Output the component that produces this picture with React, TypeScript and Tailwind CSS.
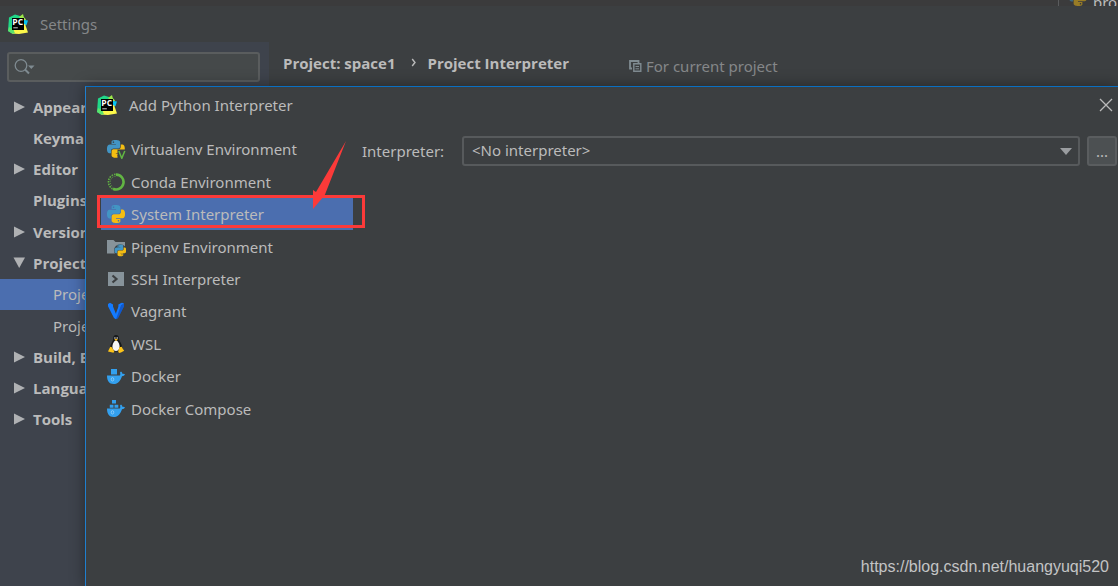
import React from 'react'
import clsx from 'clsx'

const PYTHON_SNAKE =
  'M14.25.18l.9.2.73.26.59.3.45.32.34.34.25.34.16.33.1.3.04.26.02.2-.01.13V8.5l-.05.63-.13.55-.21.46-.26.38-.3.31-.33.25-.35.19-.35.14-.33.1-.3.07-.26.04-.21.02H8.77l-.69.05-.59.14-.5.22-.41.27-.33.32-.27.35-.2.36-.15.37-.1.35-.07.32-.04.27-.02.21v3.06H3.17l-.21-.03-.28-.07-.32-.12-.35-.18-.36-.26-.36-.36-.35-.46-.32-.59-.28-.73-.21-.88-.14-1.05-.05-1.23.06-1.22.16-1.04.24-.87.32-.71.36-.57.4-.44.42-.33.42-.24.4-.16.36-.1.32-.05.24-.01h.16l.06.01h8.16v-.83H6.18l-.01-2.75-.02-.37.05-.34.11-.31.17-.28.25-.26.31-.23.38-.2.44-.18.51-.15.58-.12.64-.1.71-.06.77-.04.84-.02 1.27.05zm-6.3 1.98l-.23.33-.08.41.08.41.23.34.33.22.41.09.41-.09.33-.22.23-.34.08-.41-.08-.41-.23-.33-.33-.22-.41-.09-.41.09z'

function Snakes() {
  return (
    <>
      <path d={PYTHON_SNAKE} fill="#4295c4" />
      <path d={PYTHON_SNAKE} fill="#f4bd12" transform="rotate(180 12 12)" />
    </>
  )
}

function PythonIcon({ className = 'size-[18px]' }: any) {
  return (
    <svg viewBox="0 0 24 24" className={className}>
      <Snakes />
    </svg>
  )
}

function VirtualenvIcon() {
  return (
    <svg viewBox="0 0 20 20" className="size-5">
      <g transform="translate(1 1) scale(.74)">
        <Snakes />
      </g>
      <path d="M11.5 10.5h8.5v9h-8.5z" fill="#3c3f41" />
      <path d="M12.8 12l3 7.3 3-7.3" fill="none" stroke="#62b543" strokeWidth="1.5" />
    </svg>
  )
}

function CondaIcon() {
  return (
    <svg viewBox="0 0 18 18" className="size-[18px]" fill="none" stroke="#62b543">
      <path d="M9 1.6a7.4 7.4 0 1 1-3 14.100" strokeWidth="2.6" />
      <path d="M8.5 1.2a7.8 7.800 0 0 0-3 14.600" strokeWidth="1.600" strokeDasharray="1.5 1.1" />
      <path d="M8.5 3.2a5.8 5.800 0 0 0-3 10.400" strokeWidth="1" strokeDasharray="1 1.4" />
    </svg>
  )
}

function PipenvIcon() {
  return (
    <svg viewBox="0 0 20 20" className="size-5">
      <path d="M1 3h6.500l2 2H19v11.500H1z" fill="#87939a" />
      <circle cx="14.200" cy="13.500" r="6.200" fill="#3c3f41" />
      <g transform="translate(8.500 7.500) scale(.49)">
        <Snakes />
      </g>
    </svg>
  )
}

function SshIcon() {
  return (
    <svg viewBox="0 0 18 18" className="size-[18px]">
      <path d="M1 2h16v14H1z" fill="#87939a" />
      <path d="M5.500 5.500L9.500 9l-4 3.500" fill="none" stroke="#3c3f41" strokeWidth="2.200" />
    </svg>
  )
}

function VagrantIcon() {
  return (
    <svg viewBox="0 0 18 18" className="size-[18px]">
      <path d="M11.500 2.500L15 .8l2 1v2.400L11 16l-2 1.200-2-1.700L11.500 5z" fill="#1159cc" />
      <path d="M1 2l2-1.200 3 1.700v2L9 12l2.500-7.500v-2L15 .8l2 1-3 1.500v1.500L10.500 16 9 17.200 7 16 1 4.200z" fill="#147bff" />
      <path d="M14 3.300l3-1.500v2.400L11 16l-2 1.200z" fill="#1159cc" />
    </svg>
  )
}

function LinuxIcon() {
  return (
    <svg viewBox="0 0 18 18" className="size-[18px]">
      <path
        d="M9 0c2.200 0 3 1.500 3 3.500 0 2.500 3.200 5 3.200 9.500 0 2-1.500 3.500-3 3.500H6c-1.700 0-3-1.300-3-3.500C3 9 6.200 6.500 6.200 3.500 6.200 1.500 7 0 9 0z"
        fill="#16191b"
      />
      <path d="M9 5.500c1.600 0 3.600 3 3.600 6.300 0 2.500-1.500 4.200-3.600 4.200s-3.600-1.700-3.600-4.200C5.400 8.500 7.400 5.500 9 5.500z" fill="#f5f5f5" />
      <circle cx="7.900" cy="3" r=".8" fill="#ddd" />
      <circle cx="10.200" cy="3" r=".8" fill="#ddd" />
      <path d="M7.300 4.500L9 3.700l1.900.8L9 6z" fill="#fcb813" />
      <path d="M3.300 11.700l1.500.5 2.500 4-.8 1.600-5.500-1.200.8-1.800z" fill="#fdc419" />
      <path d="M14.700 11.700l-2.300.5-1.300 4 .9 1.800 2-.6 3.200-1.600-1.500-2z" fill="#fdc419" />
    </svg>
  )
}

function Whale() {
  return (
    <>
      <path
        d="M0 8.500h12.800c.6-.7.600-1.800.2-3l1-.9c.8.600 1.400 1.500 1.500 2.300.9-.2 1.800 0 2.500.4-.5 1.200-1.600 1.900-3 1.900C13.600 13.500 11.200 17 6.500 17 2.200 17 0 14 0 8.500z"
        fill="#33a0ee"
      />
      <ellipse cx="5.500" cy="12.300" rx="1.300" ry="1.700" fill="none" stroke="#9ad0f7" strokeWidth=".8" />
    </>
  )
}

function DockerIcon() {
  return (
    <svg viewBox="0 0 18 18" className="size-[18px]">
      <path d="M4 2h6v5.500H4z" fill="#33a0ee" />
      <Whale />
    </svg>
  )
}

function ComposeIcon() {
  return (
    <svg viewBox="0 0 18 18" className="size-[18px]">
      <path d="M5 0h4v3.500H5zM2.800 4.700h3.700v3.100H2.800zM7.500 4.700h3.800v3.100H7.500z" fill="#33a0ee" />
      <Whale />
    </svg>
  )
}

function PyCharmIcon() {
  return (
    <svg viewBox="0 0 20 20" className="size-5 shrink-0">
      <path d="M1 3.500L7 .5l5 1.500 3 5-5 12-6 .5L0 17z" fill="#21d789" />
      <path d="M11 3l4-3 .8 3 2.200 2.500-2 3z" fill="#9be84a" />
      <path d="M16 6l4 .5-1.500 4.500-3 1z" fill="#07c3f2" />
      <path d="M17 10l3 8.500-6 1-3 .5-7-.5 2-4z" fill="#fcf84a" />
      <path d="M1 13l4 2 2 4.300-3 .2L0 17z" fill="#5be36d" />
      <path d="M4 4h12v12H4z" fill="#000" />
      <text x="4.300" y="11" fontSize="8.500" fontWeight="700" fill="#fff" className="font-['Open_Sans',sans-serif]">
        PC
      </text>
      <path d="M5.300 13.300h4.500v1H5.300z" fill="#ccc" />
    </svg>
  )
}

function TreeArrow({ open }: any) {
  return (
    <svg viewBox="0 0 12 12" className="size-3">
      <path d={open ? 'M0.500 0.500h11.500L6.200 11z' : 'M1 .5v11L12 6z'} fill="#afb1b3" />
    </svg>
  )
}

function TreeItem({ item }: any) {
  return (
    <li className={clsx('flex', item.selected && 'bg-[#4b6eaf]')}>
      <button
        type="button"
        className={clsx(
          'flex w-full items-center whitespace-nowrap text-left',
          item.child ? 'pl-[53px]' : "pl-[13px] font-['Open_Sans',sans-serif] font-bold"
        )}
      >
        {!item.child && (
          <span className="w-5 shrink-0">
            {item.arrow && <TreeArrow open={item.arrow === 'open'} />}
          </span>
        )}
        {item.label}
      </button>
    </li>
  )
}

function Sidebar() {
  return (
    <aside className="w-[269px] shrink-0 bg-[#3e434c] pt-2.5">
      <div className="relative ml-[7px] mr-[9px]">
        <input
          type="text"
          aria-label="Search settings"
          className="block h-[30px] w-full rounded-[3px] border-2 border-[#5a5d5e] bg-[#45494a] pl-8 text-[#bbbbbb] outline-none"
        />
        <svg viewBox="0 0 22 18" className="absolute left-[7px] top-1.5 h-[18px] w-[22px]">
          <circle cx="7" cy="7.500" r="5.800" fill="none" stroke="#7f8b91" strokeWidth="1.300" />
          <path d="M11 11.500l4 4" stroke="#7f8b91" strokeWidth="2" />
          <path d="M14 7.500h6.500l-3.200 3.500z" fill="#7f8b91" />
        </svg>
      </div>
      <ul className="mt-[9px] grid h-[344px] auto-rows-fr">
        {TREE.map((item) => (
          <TreeItem key={item.id} item={item} />
        ))}
      </ul>
    </aside>
  )
}

function Breadcrumb() {
  return (
    <div className="flex h-[42px] items-center whitespace-nowrap pl-3.5 font-['Open_Sans',sans-serif] font-bold">
      <span>Project: space1</span>
      <svg viewBox="0 0 6 10" className="ml-[15px] mr-[11px] h-2.5 w-1.5">
        <path d="M1.200 1L4 4.500 1.200 8" fill="none" stroke="#bbbbbb" strokeWidth="1.400" />
      </svg>
      <span>Project Interpreter</span>
      <span className="ml-[60px] flex items-center gap-1 pt-1.5 font-['Noto_Sans',sans-serif] font-normal text-[#858789]">
        <svg viewBox="0 0 13 12" className="h-3 w-[13px]" fill="none" stroke="#7f8b91">
          <path d="M3 8.500H1V1h8.500v2" strokeWidth="1.800" />
          <path d="M4.800 3.700h7v7.600h-7z" strokeWidth="1.400" />
          <path d="M6.500 6.500H10M6.500 8.800H10" />
        </svg>
        For current project
      </span>
    </div>
  )
}

function EnvList() {
  return (
    <ul className="relative grid h-[292px] w-[252px] shrink-0 auto-rows-fr">
      {ENVS.map(({ label, Icon, selected }) => (
        <li key={label} className={clsx('flex', selected && 'bg-[#4b6eaf]')}>
          <button type="button" className="flex w-full items-center whitespace-nowrap text-left">
            <span className="flex w-[30px] shrink-0 justify-center">
              <Icon />
            </span>
            {label}
          </button>
        </li>
      ))}
      {/* highlight frame and pointer over the selected environment */}
      <li aria-hidden="true" className="pointer-events-none absolute -left-1 top-[62px] h-[33px] w-[268px] border-[3px] border-[#fc3a39]">
        <svg viewBox="0 0 34 68" className="absolute -top-[57px] left-[213px] h-[68px] w-[34px]">
          <path d="M33 0L12 53.500 11 55 0 68V49l3 2z" fill="#fc3a39" />
        </svg>
      </li>
    </ul>
  )
}

function AddInterpreterDialog() {
  return (
    <section
      role="dialog"
      aria-labelledby="dialog-title"
      className="absolute bottom-0 left-[85px] right-0 top-[86px] border-l border-t border-l-[#1f7fcf] border-t-[#0a6fc2] bg-[#3c3f41] shadow-[0_0_14px_rgba(0,0,0,0.4)]"
    >
      <header className="flex h-9 items-center pl-[11px] pr-[5px]">
        <PyCharmIcon />
        <h2 id="dialog-title" className="ml-3 flex-1">
          Add Python Interpreter
        </h2>
        <button type="button" aria-label="Close">
          <svg viewBox="0 0 14 14" className="size-3.5">
            <path d="M1 1l12 12M13 1L1 13" stroke="#bbbbbb" strokeWidth="1.300" />
          </svg>
        </button>
      </header>
      <div className="flex items-start pl-[15px] pt-2.5">
        <EnvList />
        <div className="ml-[9px] mt-[3px] flex min-w-0 flex-1 items-center pr-px">
          <label htmlFor="interpreter" className="w-[100px] shrink-0">
            Interpreter:
          </label>
          <div className="relative min-w-0 flex-1">
            <select
              id="interpreter"
              className="block h-[30px] w-full appearance-none rounded-[3px] border-2 border-[#575a5c] bg-[#3c3f41] pb-0.5 pl-2 outline-none"
            >
              <option>&lt;No interpreter&gt;</option>
            </select>
            <svg viewBox="0 0 12 7" className="pointer-events-none absolute right-2 top-3 h-[7px] w-3">
              <path d="M0 0h12L6 7z" fill="#9a9da0" />
            </svg>
          </div>
          <button
            type="button"
            className="ml-[7px] h-[30px] w-[30px] shrink-0 rounded-[3px] border-2 border-[#5a5d5f] bg-[#4c5052] leading-6"
          >
            ...
          </button>
        </div>
      </div>
    </section>
  )
}

function App() {
  return (
    <div className="relative flex h-screen flex-col overflow-hidden bg-[#3c3f41] font-['Noto_Sans','Open_Sans',sans-serif] text-[15px] leading-5 text-[#bbbbbb]">
      {/* bottom edge of the editor window behind */}
      <div className="flex h-1.5 shrink-0 items-end justify-end overflow-hidden bg-[#3b3b3c]">
        <span className="h-1.5 w-px bg-[#5a5c5e]" />
        <PythonIcon className="ml-2.5 size-[18px] opacity-50" />
        <span className="-mb-1.5 ml-1.5 w-[25px] overflow-hidden">project</span>
      </div>
      <header className="flex h-9 shrink-0 items-center gap-3 pl-2">
        <PyCharmIcon />
        <h1 className="text-[#858789]">Settings</h1>
      </header>
      <main className="flex flex-1">
        <Sidebar />
        <Breadcrumb />
      </main>
      <AddInterpreterDialog />
      <a
        href="https://blog.csdn.net/huangyuqi520"
        className="absolute bottom-[9px] right-[9px] font-['Liberation_Sans',sans-serif] text-base leading-5 text-[#c3c4c5]"
      >
        https://blog.csdn.net/huangyuqi520
      </a>
    </div>
  )
}

export default App

const TREE = [
  { id: 1, label: 'Appearance & Behavior', arrow: 'closed' },
  { id: 2, label: 'Keymap' },
  { id: 3, label: 'Editor', arrow: 'closed' },
  { id: 4, label: 'Plugins' },
  { id: 5, label: 'Version Control', arrow: 'closed' },
  { id: 6, label: 'Project: space1', arrow: 'open' },
  { id: 7, label: 'Project Interpreter', child: true, selected: true },
  { id: 8, label: 'Project Structure', child: true },
  { id: 9, label: 'Build, Execution, Deployment', arrow: 'closed' },
  { id: 10, label: 'Languages & Frameworks', arrow: 'closed' },
  { id: 11, label: 'Tools', arrow: 'closed' },
]

const ENVS = [
  { label: 'Virtualenv Environment', Icon: VirtualenvIcon },
  { label: 'Conda Environment', Icon: CondaIcon },
  { label: 'System Interpreter', Icon: PythonIcon, selected: true },
  { label: 'Pipenv Environment', Icon: PipenvIcon },
  { label: 'SSH Interpreter', Icon: SshIcon },
  { label: 'Vagrant', Icon: VagrantIcon },
  { label: 'WSL', Icon: LinuxIcon },
  { label: 'Docker', Icon: DockerIcon },
  { label: 'Docker Compose', Icon: ComposeIcon },
]
